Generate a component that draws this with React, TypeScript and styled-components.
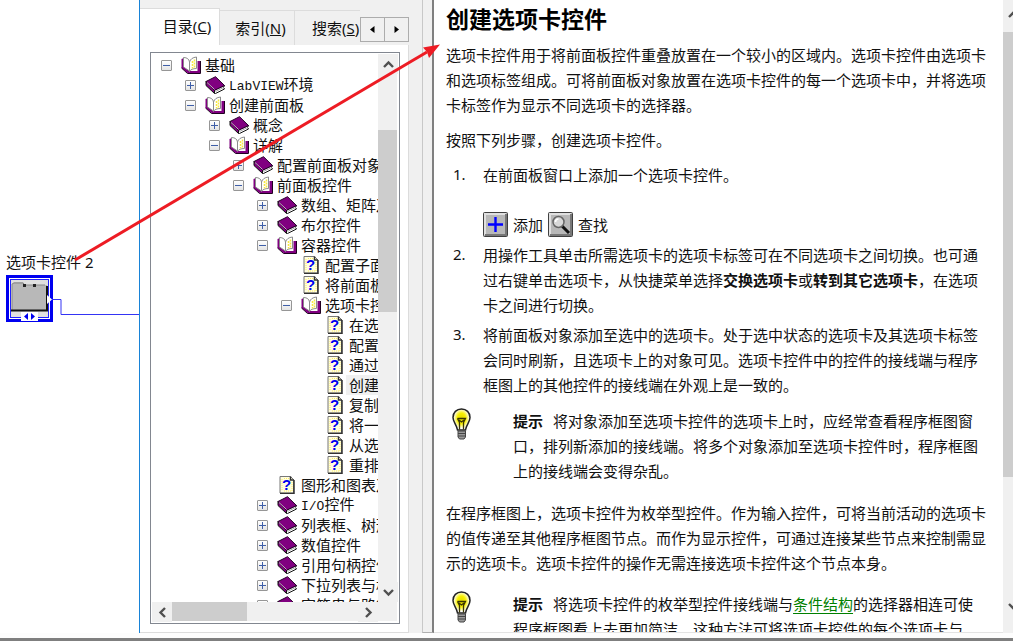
import React from 'react';
import styled, { createGlobalStyle, css } from 'styled-components';

const Global = createGlobalStyle`
  * { box-sizing: border-box; }
  body {
    margin: 0;
    background: #fff;
    color: #111;
    font-family: "Noto Sans CJK SC", "Noto Sans", sans-serif;
    font-size: 15px;
  }
  button { font: inherit; color: inherit; padding: 0; margin: 0; }
  svg { display: block; flex: none; }
`;

const latinFirst = css`
  font-family: "Noto Sans", "Noto Sans CJK SC", sans-serif;
`;

const Desktop = styled.div`
  position: relative;
  display: flex;
  flex-direction: column;
  height: 100vh;
  overflow: hidden;
`;

const Workspace = styled.main`
  flex: 1;
  min-height: 0;
  display: flex;
`;

const WindowEdge = styled.div`
  flex: none;
  height: 8px;
  background: #fdfdfd;
  border-bottom: 3px solid #7f7f7f;
`;

/* Block diagram */
const Diagram = styled.section`
  position: relative;
  flex: none;
  width: 139px;
`;

const Terminal = styled.figure`
  position: absolute;
  left: 6px;
  top: 250px;
  margin: 0;
`;

const TerminalLabel = styled.figcaption`
  ${latinFirst}
  line-height: 25px;
  white-space: nowrap;
`;

/* Navigation pane */
const NavPane = styled.aside`
  flex: none;
  width: 283px;
  display: flex;
  flex-direction: column;
  padding-top: 8px;
  background: #f0f0f0;
  border-left: 1px solid #1883d7;
`;

const TabBar = styled.div`
  flex: none;
  display: flex;
  align-items: flex-end;
  height: 37px;
  padding-right: 12px;
`;

const Tab = styled.button<{ $active?: boolean; $cut?: boolean }>`
  ${latinFirst}
  flex: none;
  width: ${p => (p.$active ? 80 : p.$cut ? 65 : 75)}px;
  height: ${p => (p.$active ? 37 : 35)}px;
  padding: 0 0 ${p => (p.$active ? 4 : 2)}px ${p => (p.$cut ? 17 : p.$active ? 15 : 7)}px;
  overflow: hidden;
  white-space: nowrap;
  text-align: ${p => (p.$cut ? 'left' : 'center')};
  background: ${p => (p.$active ? '#fff' : '#f0f0f0')};
  border: solid #dcdcdc;
  border-width: ${p => (p.$cut ? '1px 0 0' : '1px 1px 0 0')};
`;

const TabArrows = styled.div`
  display: flex;
  margin: 0 0 3px;
`;

const TabArrow = styled.button`
  display: grid;
  place-items: center;
  width: 25px;
  height: 25px;
  background: #f0f0f0;
  border: 1px solid #acacac;
  & + & { margin-left: -1px; }
`;

const TabPanel = styled.div`
  flex: 1;
  min-height: 0;
  display: flex;
  margin-right: 13px;
  padding: 7px 8px 8px 10px;
  background: #fff;
  border: solid #dcdcdc;
  border-width: 0 1px 1px 0;
`;

const TreeBox = styled.div`
  flex: 1;
  min-width: 0;
  display: grid;
  grid-template-columns: minmax(0, 1fr) 19px;
  grid-template-rows: minmax(0, 1fr) 19px;
  padding: 1px 2px 2px 1px;
  border: 1px solid #828790;
`;

const Tree = styled.ul`
  margin: 0;
  padding: 1px 0 0;
  overflow: hidden;
  list-style: none;
`;

const TreeRow = styled.li<{ $level: number }>`
  display: flex;
  align-items: center;
  height: 20px;
  padding-left: ${p => 9 + p.$level * 24}px;
  white-space: nowrap;
`;

const Expander = styled.button`
  flex: none;
  display: grid;
  place-items: center;
  width: 11px;
  height: 11px;
  margin-right: 8px;
  background: linear-gradient(#fff, #e4e4e4);
  border: 1px solid #969696;
  border-radius: 1px;
`;

const LeafGap = styled.span`
  flex: none;
  width: 19px;
`;

const IconCell = styled.span`
  flex: none;
  display: grid;
  place-items: center;
  width: 22px;
  height: 20px;
`;

const RowLabel = styled.span<{ $selected?: boolean }>`
  padding: 0 3px;
  line-height: 20px;
  ${p => p.$selected && css`background: #f0f0f0;`}
`;

const Mono = styled.span`
  font-family: "Liberation Mono", monospace;
  font-size: 13px;
`;

/* Scroll bars */
const VTrack = styled.div`
  display: flex;
  flex-direction: column;
  background: #f0f0f0;
`;

const HTrack = styled.div`
  grid-column: 1 / -1;
  display: flex;
  background: #f0f0f0;
`;

const ScrollButton = styled.button`
  flex: none;
  display: grid;
  place-items: center;
  width: 20px;
  height: 20px;
  background: #f0f0f0;
  border: 0;
`;

const Gap = styled.span<{ $grow: number }>`
  flex: ${p => p.$grow} 0 0;
`;

const Thumb = styled.span<{ $grow: number }>`
  flex: ${p => p.$grow} 0 0;
  background: #cdcdcd;
`;

const Splitter = styled.div`
  flex: none;
  width: 12px;
  background: #f0f0f0;
  border-left: 1px solid #c8c8c8;
  border-right: 2px solid #808080;
  border-bottom: 1px solid #b0b0b0;
`;

/* Help topic */
const Article = styled.article`
  flex: 1;
  min-width: 0;
  overflow: hidden;
  padding: 0 15px 0 12px;
  line-height: 25px;
  border-bottom: 1px solid #e3e3e3;
`;

const Title = styled.h1`
  margin: 0;
  padding: 2px 0 8px;
  font-size: 23px;
  line-height: 32px;
  color: #000;
`;

const Para = styled.p`
  margin: 0 0 10px;
`;

const Steps = styled.ol`
  margin: 0;
  padding: 0 8px 0 7px;
  list-style: none;
`;

const Step = styled.li`
  display: flex;
  margin-bottom: 5px;
`;

const StepNumber = styled.span`
  ${latinFirst}
  flex: none;
  width: 30px;
`;

const StepBody = styled.div`
  flex: 1;
`;

const Tools = styled.div`
  display: flex;
  align-items: center;
  gap: 5px;
  padding-top: 25px;
`;

const Tip = styled.div`
  display: flex;
  gap: 42px;
  padding: 6px 8px 17px 6px;
`;

const TipText = styled.p`
  flex: 1;
  margin: 0;
`;

const TipLabel = styled.strong`
  margin-right: 10px;
`;

const TopicLink = styled.a`
  color: #008000;
  text-decoration: underline;
  text-underline-offset: 3px;
`;

const EdgeTrack = styled.div`
  flex: none;
  width: 10px;
  display: flex;
  flex-direction: column;
  overflow: hidden;
  padding: 4px 0 17px;
  background: #f0f0f0;
`;

const Overlay = styled.svg`
  position: absolute;
  left: 0;
  top: 0;
  pointer-events: none;
`;

const OpenBook = () => (
  <svg width="20" height="18" viewBox="0 0 20 18">
    <path d="M.5 3L3 2v9l5.500 4h8V5H19v12H6.500l-6-5z" fill="#800080" />
    <path d="M.5 12l6 5.500h13V5" fill="none" stroke="#200020" />
    <path d="M2.500 1.500C6 1.500 8 3 8.500 6v9l-6-4z" fill="#fff" stroke="#8c8c8c" />
    <path d="M8.500 6c1-3 3-4.500 7-5v11.500c-3.500 0-6 1-7 3z" fill="#fff" stroke="#8c8c8c" />
    <path d="M11.500 5v7.500M13.500 3.500v8" stroke="#f8e840" strokeWidth="1.500" strokeDasharray="2 1" />
  </svg>
);

const ClosedBook = () => (
  <svg width="20" height="18" viewBox="0 0 20 18">
    <path d="M9.500 14l10-4.500-1 2 1 1.500-9 4.500-1.500-1z" fill="#fff" stroke="#111" />
    <path d="M10.500 15.500l8-4" stroke="#aaa" />
    <path d="M1 5.500L10.500.700l9 8.800-10 4.800z" fill="#800080" stroke="#26002a" />
    <path d="M1 5.500v4l8.500 8v-3z" fill="#800080" stroke="#111" />
    <path d="M2 6.500l7.500 7" stroke="#e0a8e0" />
  </svg>
);

const PageIcon = () => (
  <svg width="16" height="18" viewBox="0 0 16 18">
    <path d="M1 .5h10.500l3 3v13.500H1z" fill="#fffde0" stroke="#777" />
    <path d="M3 3v12M13 6v9M5 15h7M5 2.500h5" stroke="#ffef60" strokeDasharray="1 1" />
    <path d="M1 17.500h14V4M11.500.5V4H15" fill="none" stroke="#333" strokeWidth="1.500" />
    <text x="7.500" y="14" textAnchor="middle" fontFamily="Liberation Sans, sans-serif" fontWeight="700" fontSize="15" fill="#0000f0">?</text>
  </svg>
);

const Chevron = ({ d }: { d: string }) => (
  <svg width="11" height="11" viewBox="0 0 11 11">
    <path d={d} fill="none" stroke="#505050" strokeWidth="2.400" />
  </svg>
);
const UP = 'M1 8l4.500-4.500L10 8';
const DOWN = 'M1 3l4.500 4.500L10 3';
const LEFT = 'M8 1L3.500 5.500 8 10';
const RIGHT = 'M3 1l4.500 4.500L3 10';

const Bulb = () => (
  <svg width="19" height="32" viewBox="0 0 19 32">
    <defs>
      <radialGradient id="glow" cx=".5" cy=".45" r=".5">
        <stop offset="0" stopColor="#e0d800" />
        <stop offset=".5" stopColor="#f8f000" />
        <stop offset=".95" stopColor="#fff" />
      </radialGradient>
    </defs>
    <path d="M9.500 1C4.500 1 1 4.500 1 9.500c0 4.500 3.500 6.500 4.500 12.500h8C14.500 16 18 14 18 9.500 18 4.500 14.500 1 9.500 1z" fill="url(#glow)" stroke="#222" strokeWidth="1.500" />
    <path d="M5.500 10.500h8l-2 4v7M5.500 10.500l2 4v7M7 12l2.500 2 2.500-2" fill="none" stroke="#3a3500" strokeWidth="1.300" />
    <path d="M6 23h7.500v6l-1.500 2H7.500L6 29z" fill="#999" stroke="#444" />
    <path d="M6 25.500h7.500M6 28h7.500" stroke="#444" />
  </svg>
);

const Bevel = ({ children }: { children: React.ReactNode }) => (
  <svg width="25" height="25" viewBox="0 0 25 25">
    <rect x=".5" y=".5" width="24" height="24" rx="1" fill="#b8b8b8" stroke="#404040" />
    <path d="M2 23V2h21" fill="none" stroke="#e0e0e0" strokeWidth="2" />
    <path d="M2 23h21V2" fill="none" stroke="#787878" strokeWidth="2" />
    {children}
  </svg>
);

type Kind = 'open' | 'closed' | 'page';
const rows: { level: number; kind: Kind; text: React.ReactNode; selected?: boolean }[] = [
  { level: 0, kind: 'open', text: '基础' },
  { level: 1, kind: 'closed', text: <><Mono>LabVIEW</Mono>环境</> },
  { level: 1, kind: 'open', text: '创建前面板' },
  { level: 2, kind: 'closed', text: '概念' },
  { level: 2, kind: 'open', text: '详解' },
  { level: 3, kind: 'closed', text: '配置前面板对象' },
  { level: 3, kind: 'open', text: '前面板控件' },
  { level: 4, kind: 'closed', text: '数组、矩阵及簇' },
  { level: 4, kind: 'closed', text: '布尔控件' },
  { level: 4, kind: 'open', text: '容器控件' },
  { level: 5, kind: 'page', text: '配置子面板' },
  { level: 5, kind: 'page', text: '将前面板' },
  { level: 5, kind: 'open', text: '选项卡控件' },
  { level: 6, kind: 'page', text: '在选项卡' },
  { level: 6, kind: 'page', text: '配置选项' },
  { level: 6, kind: 'page', text: '通过程序' },
  { level: 6, kind: 'page', text: '创建选项卡控件', selected: true },
  { level: 6, kind: 'page', text: '复制选项' },
  { level: 6, kind: 'page', text: '将一个' },
  { level: 6, kind: 'page', text: '从选项卡' },
  { level: 6, kind: 'page', text: '重排选项' },
  { level: 4, kind: 'page', text: '图形和图表及' },
  { level: 4, kind: 'closed', text: <><Mono>I/O</Mono>控件</> },
  { level: 4, kind: 'closed', text: '列表框、树形' },
  { level: 4, kind: 'closed', text: '数值控件' },
  { level: 4, kind: 'closed', text: '引用句柄控件' },
  { level: 4, kind: 'closed', text: '下拉列表与枚举' },
  { level: 4, kind: 'closed', text: '字符串与路径' },
];

const icons = { open: <OpenBook />, closed: <ClosedBook />, page: <PageIcon /> };

export default function App() {
  return (
    <Desktop>
      <Global />
      <Workspace>
        <Diagram>
          <Terminal>
            <TerminalLabel>选项卡控件 2</TerminalLabel>
            <svg width="133" height="48" viewBox="0 0 133 48">
              <rect x="1.500" y="1.500" width="44" height="44" fill="#fff" stroke="#0000f0" strokeWidth="3" />
              <rect x="4.500" y="4.500" width="38" height="38" fill="#e0e0e0" stroke="#2020ff" />
              <path d="M6 9l2-2h9l2 3h22v25H6z" fill="#b8b8b8" />
              <path d="M6 35V9l2-1h9l2 2h20" fill="none" stroke="#888" />
              <path d="M41 11v25M5 35.500h37" stroke="#111" strokeWidth="2" />
              <path d="M17 9h3v3h-3zM27 9h3v3h-3z" fill="#222" />
              <path d="M41 20l5 4.500-5 4.500z" fill="#fff" />
              <path d="M15 37h17v9H15z" fill="#fff" />
              <path d="M22 38v7l-4-3.500zM25 38v7l4-3.500z" fill="#0000f0" />
              <path d="M46 24.500h9v15h78" fill="none" stroke="#3434f4" />
            </svg>
          </Terminal>
        </Diagram>

        <NavPane>
          <TabBar role="tablist">
            <Tab $active role="tab" aria-selected>目录(<u>C</u>)</Tab>
            <Tab role="tab">索引(<u>N</u>)</Tab>
            <Tab $cut role="tab">搜索(<u>S</u>)</Tab>
            <TabArrows>
              <TabArrow aria-label="向左">
                <svg width="5" height="7"><path d="M4.500 0v7L0 3.500z" fill="#000" /></svg>
              </TabArrow>
              <TabArrow aria-label="向右">
                <svg width="5" height="7"><path d="M.5 0v7L5 3.500z" fill="#000" /></svg>
              </TabArrow>
            </TabArrows>
          </TabBar>
          <TabPanel role="tabpanel">
            <TreeBox>
              <Tree>
                {rows.map((r, i) => (
                  <TreeRow key={i} $level={r.level}>
                    {r.kind === 'page' ? <LeafGap /> : (
                      <Expander aria-label={r.kind === 'open' ? '折叠' : '展开'}>
                        <svg width="7" height="7">
                          <path d={r.kind === 'open' ? 'M0 3.500h7' : 'M0 3.500h7M3.500 0v7'} stroke="#3f5fa8" />
                        </svg>
                      </Expander>
                    )}
                    <IconCell>{icons[r.kind]}</IconCell>
                    <RowLabel $selected={r.selected}>{r.text}</RowLabel>
                  </TreeRow>
                ))}
              </Tree>
              <VTrack>
                <ScrollButton aria-label="向上滚动"><Chevron d={UP} /></ScrollButton>
                <Gap $grow={56} />
                <Thumb $grow={181} />
                <Gap $grow={269} />
                <ScrollButton aria-label="向下滚动"><Chevron d={DOWN} /></ScrollButton>
              </VTrack>
              <HTrack>
                <ScrollButton aria-label="向左滚动"><Chevron d={LEFT} /></ScrollButton>
                <Thumb $grow={74} />
                <Gap $grow={110} />
                <ScrollButton aria-label="向右滚动"><Chevron d={RIGHT} /></ScrollButton>
                <LeafGap />
              </HTrack>
            </TreeBox>
          </TabPanel>
        </NavPane>

        <Splitter />

        <Article>
          <Title>创建选项卡控件</Title>
          <Para>选项卡控件用于将前面板控件重叠放置在一个较小的区域内。选项卡控件由选项卡和选项标签组成。可将前面板对象放置在选项卡控件的每一个选项卡中，并将选项卡标签作为显示不同选项卡的选择器。</Para>
          <Para>按照下列步骤，创建选项卡控件。</Para>
          <Steps>
            <Step>
              <StepNumber>1.</StepNumber>
              <StepBody>
                在前面板窗口上添加一个选项卡控件。
                <Tools>
                  <Bevel><path d="M12.500 5v15M5 12.500h15" stroke="#0000ff" strokeWidth="2.400" /></Bevel>
                  添加
                  <Bevel>
                    <path d="M14 14l7 7" stroke="#111" strokeWidth="3" />
                    <circle cx="10.500" cy="10" r="5.500" fill="#d8d8d8" stroke="#666" strokeWidth="1.500" />
                    <path d="M7.500 10a3 3 0 013-3" fill="none" stroke="#fff" strokeWidth="1.500" />
                  </Bevel>
                  查找
                </Tools>
              </StepBody>
            </Step>
            <Step>
              <StepNumber>2.</StepNumber>
              <StepBody>用操作工具单击所需选项卡的选项卡标签可在不同选项卡之间切换。也可通过右键单击选项卡，从快捷菜单选择<b>交换选项卡</b>或<b>转到其它选项卡</b>，在选项卡之间进行切换。</StepBody>
            </Step>
            <Step>
              <StepNumber>3.</StepNumber>
              <StepBody>将前面板对象添加至选中的选项卡。处于选中状态的选项卡及其选项卡标签会同时刷新，且选项卡上的对象可见。选项卡控件中的控件的接线端与程序框图上的其他控件的接线端在外观上是一致的。</StepBody>
            </Step>
          </Steps>
          <Tip>
            <Bulb />
            <TipText><TipLabel>提示</TipLabel>将对象添加至选项卡控件的选项卡上时，应经常查看程序框图窗口，排列新添加的接线端。将多个对象添加至选项卡控件时，程序框图上的接线端会变得杂乱。</TipText>
          </Tip>
          <Para>在程序框图上，选项卡控件为枚举型控件。作为输入控件，可将当前活动的选项卡的值传递至其他程序框图节点。而作为显示控件，可通过连接某些节点来控制需显示的选项卡。选项卡控件的操作无需连接选项卡控件这个节点本身。</Para>
          <Tip>
            <Bulb />
            <TipText><TipLabel>提示</TipLabel>将选项卡控件的枚举型控件接线端与<TopicLink href="#case">条件结构</TopicLink>的选择器相连可使程序框图看上去更加简洁。这种方法可将选项卡控件的每个选项卡与</TipText>
          </Tip>
        </Article>

        <EdgeTrack>
          <ScrollButton aria-label="向上"><Chevron d={UP} /></ScrollButton>
          <Gap $grow={8} />
          <Thumb $grow={443} />
          <Gap $grow={118} />
          <ScrollButton aria-label="向下"><Chevron d={DOWN} /></ScrollButton>
        </EdgeTrack>
      </Workspace>
      <WindowEdge />
      <Overlay width="450" height="270" viewBox="0 0 450 270" aria-hidden="true">
        <path d="M75 260L427 52" stroke="#ed1c24" strokeWidth="3" />
        <path d="M440 44.500L423 47.500l4 4.500 2 6z" fill="#ed1c24" />
      </Overlay>
    </Desktop>
  );
}
